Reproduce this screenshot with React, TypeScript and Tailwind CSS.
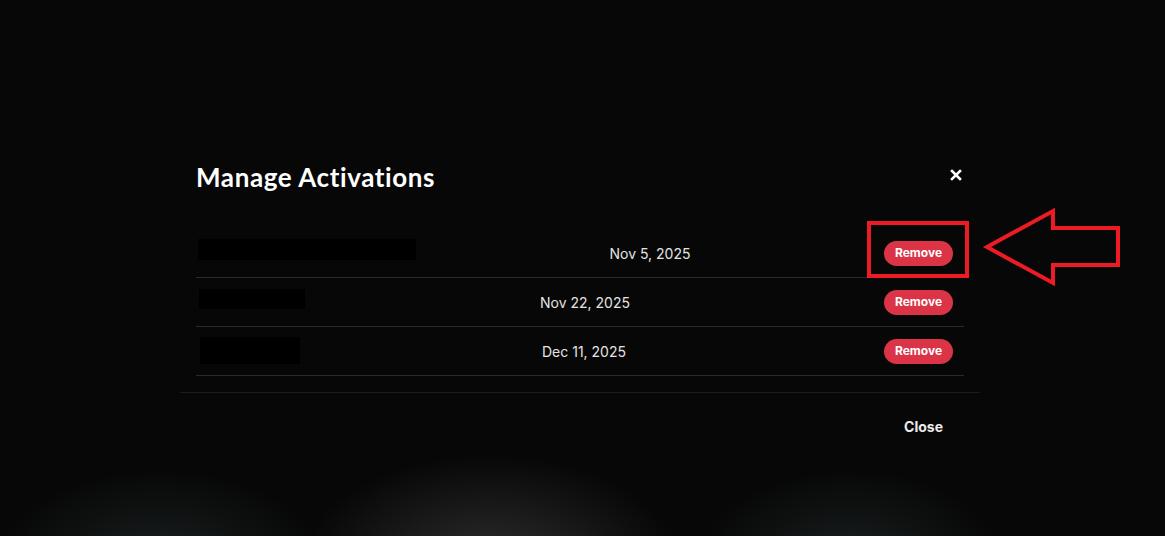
import React from 'react';

type Activation = {
  id: number;
  date: string;
  cellWidth: string;
  barClass: string;
};

const activations: Activation[] = [
  { id: 1, date: 'Nov 5, 2025', cellWidth: 'w-[218px]', barClass: 'left-0 top-[10px] w-[218px] h-[21px]' },
  { id: 2, date: 'Nov 22, 2025', cellWidth: 'w-[88px]', barClass: 'left-[1px] top-[11px] w-[106px] h-[20px]' },
  { id: 3, date: 'Dec 11, 2025', cellWidth: 'w-[86px]', barClass: 'left-[2px] top-[10px] w-[100px] h-[27px]' },
];

const CloseIcon = () => (
  <svg width="12" height="12" viewBox="0 0 12 12" className="text-white">
    <path d="M2 2L10 10M10 2L2 10" stroke="currentColor" strokeWidth="2.6" strokeLinecap="square" />
  </svg>
);

const ActivationRow = ({ item }: { item: Activation }) => (
  <div className="flex h-[49px] items-center border-b border-[#2b2b2b]">
    {/* device name is masked out */}
    <div className={`relative ml-[2px] h-full shrink-0 ${item.cellWidth}`}>
      <div className={`absolute bg-black ${item.barClass}`}></div>
    </div>
    <div className="flex-1 text-center text-[14px] text-[#e4e4e4]">{item.date}</div>
    <button className="mr-[11px] h-[25px] w-[69px] rounded-full bg-[#dc3447] text-[12px] font-bold text-white">
      Remove
    </button>
  </div>
);

export default function App() {
  return (
    <div
      className="relative h-[536px] w-full overflow-hidden bg-[#070707] bg-[radial-gradient(ellipse_160px_90px_at_160px_560px,#1a1f1f,transparent),radial-gradient(ellipse_190px_110px_at_490px_565px,#2d2d2d,transparent),radial-gradient(ellipse_150px_90px_at_850px_560px,#1a1f1f,transparent)]"
      style={{ fontFamily: 'Inter, "Liberation Sans", sans-serif' }}
    >
      <div className="ml-[180px] mt-[150px] w-[800px]">
        <div className="flex h-[79px] items-start justify-between px-4 pt-[11px]">
          <h2 className="font-['Lato',sans-serif] text-[26px] font-bold leading-[32px] tracking-[0.6px] text-white">
            Manage Activations
          </h2>
          <button className="mr-[2px] mt-[8px]">
            <CloseIcon />
          </button>
        </div>

        <div className="px-4">
          {activations.map((item) => (
            <ActivationRow key={item.id} item={item} />
          ))}
        </div>

        <div className="mt-4 flex justify-end border-t border-[#1c1c1c] pr-[37px] pt-[24px]">
          <button className="text-[14px] font-bold leading-5 text-[#ececec]">Close</button>
        </div>
      </div>

      {/* callout pointing at the first Remove button */}
      <svg className="pointer-events-none absolute left-0 top-0" width="1165" height="536">
        <rect x="869" y="223" width="98" height="53" fill="none" stroke="#ed1c24" strokeWidth="4" />
        <polygon
          points="987,247 1053,211 1053,228 1118,228 1118,265 1053,265 1053,283"
          fill="none"
          stroke="#ed1c24"
          strokeWidth="4"
        />
      </svg>
    </div>
  );
}
